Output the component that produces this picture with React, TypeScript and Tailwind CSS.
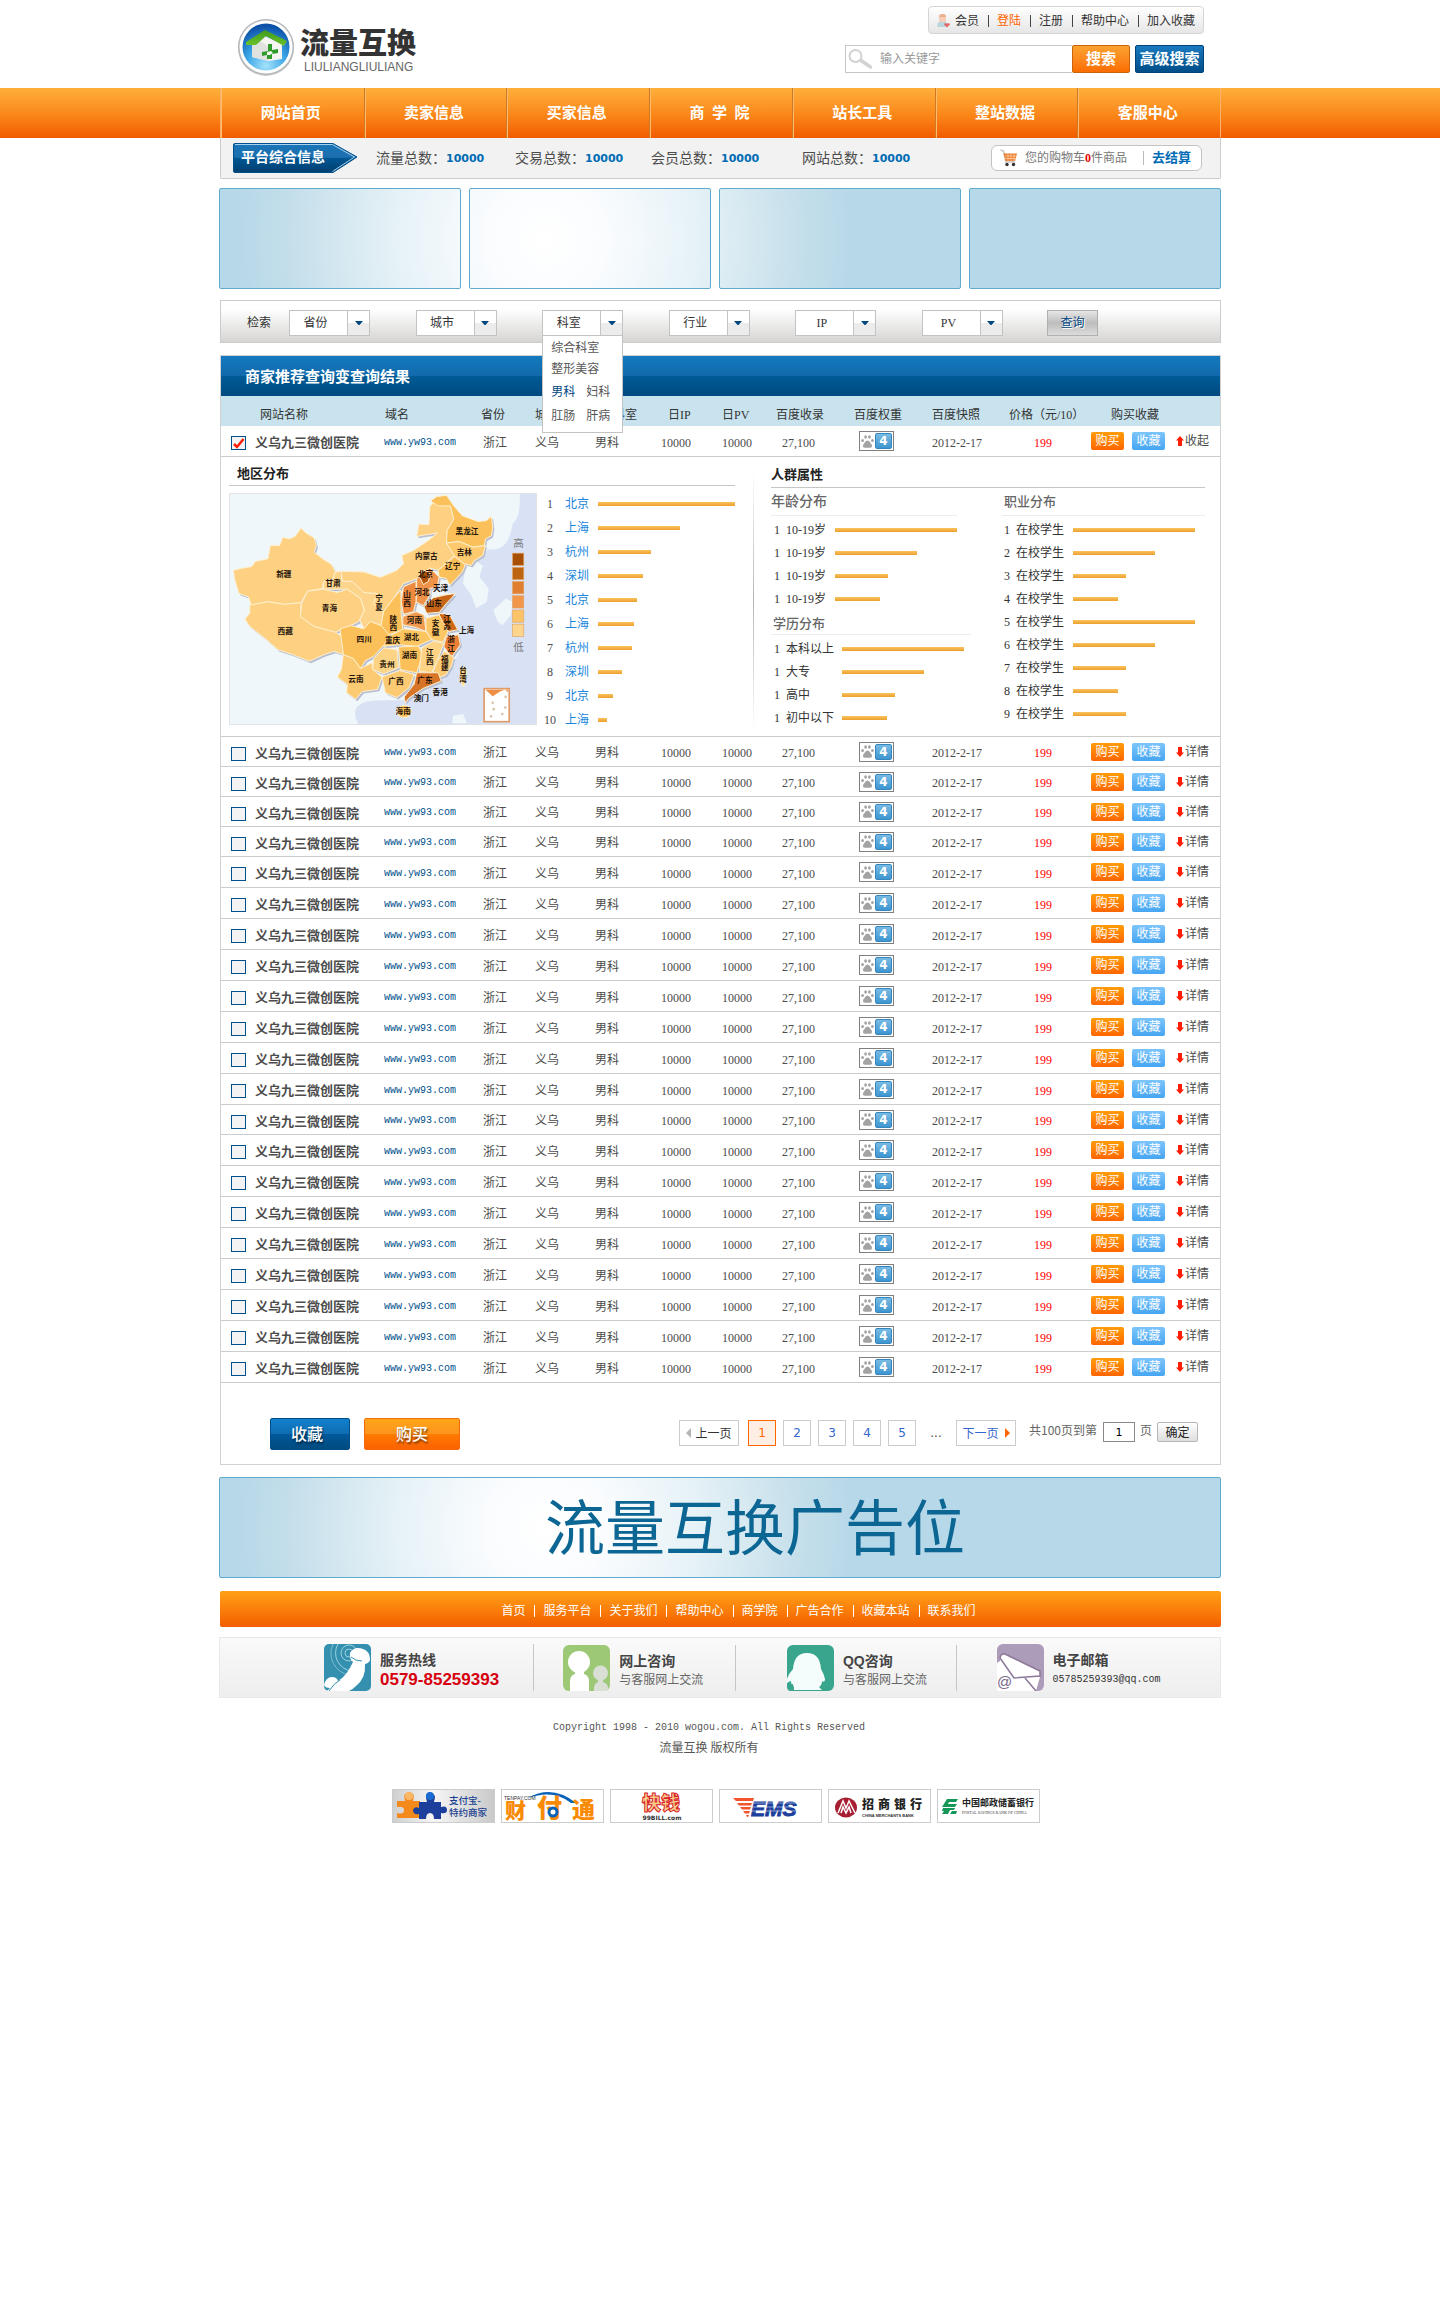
import { useState } from 'react'
import type { ReactNode } from 'react'

const NAV = ['网站首页', '卖家信息', '买家信息', '商  学  院', '站长工具', '整站数据', '客服中心']
const TOP_LINKS = ['登陆', '注册', '帮助中心', '加入收藏']
const TOTALS = ['流量总数：', '交易总数：', '会员总数：', '网站总数：']
const FILTERS = ['省份', '城市', '科室', '行业', 'IP', 'PV']
const FOOT_LINKS = ['首页', '服务平台', '关于我们', '帮助中心', '商学院', '广告合作', '收藏本站', '联系我们']

const BAR_WIDTHS = [122, 82, 53, 45]

const REGIONS = [
  { name: '北京', width: 137 },
  { name: '上海', width: 82 },
  { name: '杭州', width: 53 },
  { name: '深圳', width: 45 },
  { name: '北京', width: 39 },
  { name: '上海', width: 36 },
  { name: '杭州', width: 34 },
  { name: '深圳', width: 24 },
  { name: '北京', width: 15 },
  { name: '上海', width: 9 },
]

const JOB_WIDTHS = [122, 82, 53, 45, 122, 82, 53, 45, 53]
const EDUCATION = ['本科以上', '大专', '高中', '初中以下']

const COLUMNS = [
  { label: '', width: 'w-[34px]', pad: '' },
  { label: '网站名称', width: 'w-[129px]', pad: 'pl-[5px]' },
  { label: '域名', width: 'w-[97px]', pad: 'pl-px' },
  { label: '省份', width: 'w-[54px]', pad: '' },
  { label: '城市', width: 'w-[60px]', pad: '' },
  { label: '科室', width: 'w-[66px]', pad: 'pl-[18px]' },
  { label: '日IP', width: 'w-[61px]', pad: 'pl-[7px]' },
  { label: '日PV', width: 'w-[54px]', pad: '' },
  { label: '百度收录', width: 'w-[78px]', pad: '' },
  { label: '百度权重', width: 'w-[78px]', pad: '' },
  { label: '百度快照', width: 'w-[77px]', pad: '' },
  { label: '价格（元/10）', width: 'w-[82px]', pad: '' },
  { label: '购买收藏', width: 'w-[129px]', pad: 'pl-5' },
]

// ── Map ─────────────────────────────────────────────────────────────────────
const PROVINCES: [string, string][] = [
  ['#fdd082', 'M45,345 L75,338 L100,334 L112,318 L150,310 L157,270 L185,270 L195,245 L215,250 L232,242 L250,217 L265,232 L290,247 L296,270 L290,290 L318,312 L342,327 L354,350 L345,372 L318,380 L315,400 L270,408 L250,443 L200,448 L150,440 L100,450 L90,425 L62,415 L50,375 Z'],
  ['#fdd082', 'M95,450 L150,440 L200,448 L250,443 L248,485 L290,515 L355,532 L372,545 L378,600 L350,590 L320,600 L275,620 L225,600 L180,585 L140,550 L95,515 L80,492 L95,475 Z'],
  ['#fdd082', 'M270,408 L318,402 L360,412 L390,402 L430,430 L442,465 L425,500 L400,512 L355,532 L290,515 L248,485 L252,445 Z'],
  ['#fdd48c', 'M354,350 L372,348 L375,378 L405,378 L440,412 L480,415 L470,445 L500,470 L492,512 L460,500 L440,522 L428,495 L442,465 L430,430 L390,402 L318,402 L318,380 L345,372 Z'],
  ['#fdd082', 'M372,348 L440,350 L490,366 L540,345 L560,325 L555,300 L590,285 L635,255 L662,232 L600,242 L607,205 L637,207 L640,152 L660,128 L700,140 L712,190 L692,225 L690,262 L715,300 L665,345 L640,338 L600,370 L560,385 L530,430 L500,470 L470,445 L480,415 L440,412 L405,378 L375,378 Z'],
  ['#fbc05a', 'M642,135 L660,122 L690,118 L712,150 L738,180 L785,197 L810,195 L826,182 L830,215 L826,240 L808,250 L805,270 L770,275 L730,258 L690,262 L692,225 L712,190 L702,150 L665,150 Z'],
  ['#fdca70', 'M690,262 L730,258 L770,275 L808,270 L800,300 L775,315 L765,330 L745,325 L715,303 Z'],
  ['#fbc05a', 'M665,345 L715,303 L747,328 L738,350 L700,390 L690,370 L668,365 Z'],
  ['#ef924a', 'M600,370 L640,338 L668,365 L662,395 L640,400 L640,420 L620,452 L598,440 L600,400 Z'],
  ['#b3560c', 'M606,360 L622,345 L640,352 L636,378 L620,388 Z'],
  ['#ee8a40', 'M560,395 L598,378 L598,440 L590,470 L560,478 L553,440 Z'],
  ['#c8661a', 'M622,455 L650,428 L685,420 L716,415 L706,428 L690,445 L668,472 L630,475 Z'],
  ['#f09a50', 'M558,485 L598,470 L622,480 L628,530 L595,517 L558,510 Z'],
  ['#fcc05a', 'M530,430 L552,405 L553,478 L558,525 L510,542 L492,512 L500,470 Z'],
  ['#ce6a1a', 'M668,475 L700,480 L724,525 L697,530 L672,500 Z'],
  ['#fcc766', 'M628,490 L668,480 L695,530 L680,562 L645,555 L628,528 Z'],
  ['#ea8038', 'M690,545 L726,540 L732,570 L705,608 L682,575 Z'],
  ['#fbc05a', 'M368,522 L400,512 L440,522 L460,500 L492,512 L520,545 L500,572 L470,605 L445,618 L430,642 L408,612 L378,600 Z'],
  ['#fcc560', 'M515,545 L560,522 L628,530 L645,555 L600,575 L545,570 L500,575 Z'],
  ['#fbc05a', 'M545,577 L605,574 L618,600 L600,655 L550,645 Z'],
  ['#fdd385', 'M615,580 L650,560 L682,565 L662,620 L645,655 L608,650 Z'],
  ['#fcca74', 'M662,620 L684,590 L712,608 L705,635 L688,662 L670,668 L650,652 Z'],
  ['#fdd385', 'M470,612 L500,580 L540,585 L545,640 L500,658 L466,645 Z'],
  ['#fdca74', 'M378,600 L408,612 L430,642 L465,625 L466,645 L495,668 L482,705 L435,712 L415,735 L388,715 L390,690 L360,668 L372,645 Z'],
  ['#fdca74', 'M495,668 L548,648 L592,660 L577,700 L540,730 L505,715 Z'],
  ['#d87428', 'M600,655 L665,655 L674,680 L620,702 L578,730 L565,745 L562,728 L592,690 Z'],
]

const PLACE_NAMES: [string, number, number][] = [
  ['新疆', 198, 365], ['甘肃', 347, 391], ['青海', 336, 467], ['西藏', 202, 539], ['四川', 441, 561],
  ['重庆', 527, 565], ['湖北', 584, 555], ['湖南', 578, 611], ['贵州', 510, 639], ['云南', 416, 682],
  ['广西', 537, 690], ['广东', 625, 686], ['香港', 671, 723], ['澳门', 614, 741], ['海南', 559, 779],
  ['黑龙江', 752, 235], ['吉林', 744, 298], ['辽宁', 709, 342], ['内蒙古', 629, 312], ['北京', 627, 364],
  ['天津', 672, 409], ['河北', 616, 419], ['山东', 653, 454], ['河南', 593, 503], ['上海', 751, 535],
  ['山', 571, 427], ['西', 571, 453], ['宁', 486, 438], ['夏', 486, 466], ['陕', 529, 500], ['西', 529, 525],
  ['安', 657, 515], ['徽', 657, 540], ['江', 692, 499], ['苏', 692, 524], ['浙', 704, 562], ['江', 704, 588],
  ['江', 640, 600], ['西', 640, 627], ['福', 685, 621], ['建', 685, 648], ['台', 740, 656], ['湾', 740, 682],
]

const LEGEND = ['#a84f06', '#bd6410', '#e07f30', '#f2964a', '#fcc468', '#fdd58c']

function ChinaMap() {
  return (
    <svg
      viewBox="36 114 924 696"
      role="img"
      aria-label="地区分布"
      className="block h-[232px] w-[308px] shrink-0 border border-[#dfe3e6] font-['Noto_Sans_CJK_SC',sans-serif]"
    >
      <rect x="30" y="110" width="940" height="710" fill="#eff7fb" />
      <path
        fill="#d9e2f4"
        d="M912,110 H970 V820 H428 C400,770 415,752 450,742 C500,735 540,742 565,735 C650,710 690,670 730,590 L725,520 L670,470 L716,420 L660,400 L700,392 L760,335 C790,320 800,275 835,282 C870,280 885,240 890,205 C915,180 912,140 912,110 Z"
      />
      <path fill="#eff7fb" d="M765,310 L800,330 L790,365 L818,400 L812,440 L780,460 L765,420 L740,385 L745,350 Z" />
      <path fill="#eff7fb" d="M832,465 L870,430 L890,440 L885,480 L860,512 L845,500 Z M710,785 L740,780 L752,808 L708,808 Z" />
      <g fill="#b9bfd0" transform="translate(5 6)">
        {PROVINCES.map(([, d]) => <path key={d} d={d} />)}
      </g>
      <g stroke="#fff0cc" strokeWidth="3" strokeLinejoin="round">
        {PROVINCES.map(([fill, d]) => <path key={d} d={d} fill={fill} />)}
        <ellipse cx="562" cy="772" rx="22" ry="18" fill="#fcc05a" />
        <path d="M745,635 L752,650 L742,698 L732,680 L732,650 Z" fill="#fdd385" />
      </g>
      <rect x="804" y="703" width="76" height="100" fill="#fff" stroke="#df9a66" strokeWidth="5" />
      <path fill="#ee8f45" d="M808,706 H866 L852,712 L830,726 Z M868,706 h8 v8 z" />
      <g fill="#d9c4a8">
        <circle cx="830" cy="746" r="4" /><circle cx="833" cy="765" r="4" /><circle cx="869" cy="728" r="4" />
        <circle cx="868" cy="760" r="4" /><circle cx="859" cy="780" r="4" /><circle cx="825" cy="787" r="4" />
      </g>
      <g fontSize="23" fontWeight="700" textAnchor="middle" fill="#1c1208">
        {PLACE_NAMES.map(([name, x, y]) => <text key={`${x}-${y}`} x={x} y={y}>{name}</text>)}
      </g>
      <g fontSize="32" textAnchor="middle" fill="#777">
        <text x="908" y="275">高</text>
        <text x="908" y="588">低</text>
      </g>
      {LEGEND.map((fill, i) => (
        <rect key={fill} x="890" y={293 + i * 43} width="34" height="37" fill={fill} stroke="#e3a566" strokeWidth="2" />
      ))}
    </svg>
  )
}

// ── Icons ───────────────────────────────────────────────────────────────────
function Logo() {
  return (
    <svg viewBox="0 0 58 58" className="h-[58px] w-[58px]" aria-hidden="true">
      <defs>
        <radialGradient id="ball" cx="50%" cy="90%" r="85%">
          <stop offset="0" stopColor="#a4e2fa" />
          <stop offset=".5" stopColor="#3aa6e6" />
          <stop offset="1" stopColor="#0c50a8" />
        </radialGradient>
        <linearGradient id="roof" x1="0" y1="0" x2="0" y2="1">
          <stop offset="0" stopColor="#3f9a1a" />
          <stop offset="1" stopColor="#6cc42c" />
        </linearGradient>
      </defs>
      <circle cx="29" cy="30" r="28" fill="#c9c9c9" />
      <circle cx="29" cy="29" r="28" fill="#b5b8bb" />
      <circle cx="29" cy="29" r="26.5" fill="#fdfdfd" />
      <circle cx="29" cy="29" r="23.5" fill="url(#ball)" />
      <path d="M15 27 L28 18 L45 26 V41 L32 43 L15 39 Z" fill="#f4f4f2" />
      <path d="M15 26 L22 22 L32 29 V43 L15 39 Z" fill="#e0e2e0" />
      <path d="M9 24 L28 12 L50 23 L47 28 L29 18 L19 27 L9 27 Z" fill="url(#roof)" />
      <path d="M31 26 h4 v6 l6 -1 v4 l-6 1 v5 h-5 v-4 l-5 1 v-4 l6 -1 z" fill="#2d9a2a" />
      <path d="M30 34 l4 -1 l2 2 l-3 2 h-3 z" fill="#eef6ea" />
    </svg>
  )
}

const UserIcon = () => (
  <svg viewBox="0 0 14 14" className="h-3.5 w-3.5" aria-hidden="true">
    <rect x="2" y="0.5" width="7" height="8" rx="2" fill="#f6cdb8" />
    <path d="M2 3 q0 -3 3.5 -3 q3.5 0 3.5 3 z" fill="#e9b090" />
    <path d="M0.5 13 v-3 q0 -2 3 -2 h4 q3 0 3 2 v3 z" fill="#b9d6de" />
    <path d="M10 13.5 l-3 -3 q0 -2 3 -1 q3 -1 3 1 z" fill="#e46a6a" />
  </svg>
)

const SearchIcon = () => (
  <svg viewBox="0 0 24 20" className="h-5 w-6 shrink-0" fill="none" stroke="#d2d2d2" aria-hidden="true">
    <circle cx="7.5" cy="7" r="6" strokeWidth="2" />
    <path d="M13 11.5 L22.5 18" strokeWidth="3.5" strokeLinecap="round" />
  </svg>
)

const CartIcon = () => (
  <svg viewBox="0 0 18 18" className="h-[18px] w-[18px]" aria-hidden="true">
    <path d="M0.5 1 L3.5 2 L6 13 H15" fill="none" stroke="#c9c4c0" strokeWidth="1.5" />
    <path d="M3.5 4.5 H17 L15 12 H5.5 Z" fill="#ea7a28" />
    <path d="M4.5 7 H16 M5 9.5 H15.5 M8 5 V12 M11 5 V12 M14 5 V12" stroke="#ffd9b8" strokeWidth="0.7" />
    <circle cx="7" cy="15.5" r="1.7" fill="#333" />
    <circle cx="13.5" cy="15.5" r="1.7" fill="#333" />
  </svg>
)

const Paw = () => (
  <svg viewBox="0 0 13 13" className="h-[13px] w-[13px]" fill="#a3a3a3" aria-hidden="true">
    <ellipse cx="1.6" cy="5.5" rx="1.4" ry="1.6" />
    <ellipse cx="4.6" cy="2" rx="1.4" ry="1.7" />
    <ellipse cx="8.4" cy="2" rx="1.4" ry="1.7" />
    <ellipse cx="11.4" cy="5.5" rx="1.4" ry="1.6" />
    <path d="M6.5 5.500 q2 0 3 2.500 q2 1.500 1.500 3.500 q-0.500 1.500 -2.500 1.300 h-4 q-2 0.200 -2.500 -1.300 q-0.500 -2 1.500 -3.500 q1 -2.500 3 -2.500 z" />
  </svg>
)

const RedArrow = ({ up }: { up: boolean }) => (
  <svg viewBox="0 0 8 10" className="h-2.5 w-2" fill="#fb1d05" aria-hidden="true">
    {up ? <path d="M4 0 L8 4.5 H6 V10 H2 V4.5 H0 Z" /> : <path d="M4 10 L8 5.5 H6 V0 H2 V5.5 H0 Z" />}
  </svg>
)

const PhoneIcon = () => (
  <svg viewBox="0 0 47 47" className="h-[47px] w-[47px]" aria-hidden="true">
    <rect width="47" height="47" rx="5" fill="#3590b0" />
    <g fill="none" stroke="#9cd0df">
      <circle cx="25" cy="9" r="4" />
      <circle cx="25" cy="9" r="8" />
      <path d="M14 0 a18 18 0 0 0 14 27" />
      <path d="M9 0 a22 22 0 0 0 16 31" strokeWidth=".7" />
    </g>
    <path d="M26 9 Q30 2 39 5 Q46 7 46 16 Q45 19 41 20 Q42 34 32 42 Q28 46 25 47 H3 L6 44 Q1 44 0 41 Q2 33 8 33 Q13 33 14 37 Q22 33 29 18 Q25 14 26 9 Z" fill="#fff" />
    <path d="M5 47 Q10 39 16 36 M27 13 Q31 17 38 17" stroke="#3590b0" fill="none" />
  </svg>
)

const PeopleIcon = () => (
  <svg viewBox="0 0 47 46" className="h-[46px] w-[47px]" aria-hidden="true">
    <rect width="47" height="46" rx="6" fill="#9dc977" />
    <circle cx="16" cy="17" r="11" fill="#fff" />
    <path d="M7 46 V35 q1 -5 5 -6 v-4 h9 v4 q4 1 5 6 V46 Z" fill="#fff" />
    <circle cx="37.5" cy="28" r="7.5" fill="#d9dfd5" />
    <path d="M31 46 V42 q1 -4 4 -5 v-3 h5 v3 q4 1 5 5 v2 l-2 2 Z" fill="#d9dfd5" />
  </svg>
)

const PenguinIcon = () => (
  <svg viewBox="0 0 47 46" className="h-[46px] w-[47px]" aria-hidden="true">
    <rect width="47" height="46" rx="6" fill="#38a58c" />
    <path d="M20 8 q13 0 14 16 q3 5 4 10 q0 4 -3 2 q0 4 -3 6 l3 3 H7 l-1 -6 q-2 0 -5 3 l-1 -2 V34 q2 -6 6 -10 q1 -16 14 -16 z" fill="#f4fdfb" />
    <path d="M0 38 q3 -2 4 -2 q0 4 3 6 l-1 4 H3 q-3 -1 -3 -4 z" fill="#38a58c" />
  </svg>
)

const MailIcon = () => (
  <svg viewBox="0 0 47 47" className="h-[47px] w-[47px]" aria-hidden="true">
    <rect width="47" height="47" rx="6" fill="#ad9cb9" />
    <path d="M0 19 L3 17 L3 12 L8 10 L43 27 V33 L39 47 H0 Z" fill="#fff" />
    <path d="M3 14 L17 34 L43 32 M28 34 L39 47 M3 14 Q4 9 8 10 L43 27 V33" fill="none" stroke="#8b7899" strokeWidth="1.5" />
    <text x="7.5" y="43" fontSize="15" textAnchor="middle" fill="#7a6889" fontFamily="Liberation Sans">@</text>
  </svg>
)

const DownCaret = () => (
  <svg viewBox="0 0 8 4" className="h-1 w-2" fill="#00477f" aria-hidden="true"><path d="M0 0 H8 L4.500 4 H3.500 Z" /></svg>
)

// ── Pieces ──────────────────────────────────────────────────────────────────
const Bar = ({ width }: { width: number }) => (
  <span className="block h-1 bg-linear-to-b from-[#f9c25c] to-[#eda02c]" style={{ width }} />
)

function FilterSelect({ label }: { label: string }) {
  return (
    <div className="relative w-[81px]">
      <select
        aria-label={label}
        className="block h-[26px] w-full appearance-none border border-[#c3c3c3] bg-white pr-[28px] text-center text-xs leading-6 text-[#333]"
      >
        <option>{label}</option>
      </select>
      <span className="pointer-events-none absolute inset-y-px right-px flex w-[22px] items-center justify-center border-l border-[#c3c3c3] bg-linear-to-b from-white from-50% to-[#ececec] to-50%">
        <DownCaret />
      </span>
      {label === '科室' && (
        <ul className="absolute top-[25px] left-0 z-10 grid w-[81px] grid-cols-[35px_auto] border border-[#c3c3c3] bg-white pt-0.5 pb-1 pl-2 text-xs leading-[24px] text-[#555]">
          <li className="col-span-2 leading-[20px]">综合科室</li>
          <li className="col-span-2 leading-[22px]">整形美容</li>
          <li className="text-[#00477f]">男科</li>
          <li>妇科</li>
          <li>肛肠</li>
          <li>肝病</li>
        </ul>
      )}
    </div>
  )
}

function SiteRow({ open, tall }: { open?: boolean; tall?: boolean }) {
  const [checked, setChecked] = useState(!!open)
  const cell = 'border-b border-[#ccc] p-0 pt-[3px]'
  return (
    <tr className={tall ? 'h-[31px]' : 'h-[30px]'}>
      <td className="border-b border-[#ccc] p-0 pt-1 pl-2.5">
        <label className="relative block h-3.5 w-[15px]">
          <input
            type="checkbox"
            aria-label="义乌九三微创医院"
            checked={checked}
            onChange={(e) => setChecked(e.target.checked)}
            className="block h-3.5 w-[15px] appearance-none border border-[#00508c] bg-[#f3f3f3]"
          />
          {checked && (
            <svg viewBox="0 0 15 14" className="pointer-events-none absolute inset-0" aria-hidden="true">
              <path d="M3 8 L6 11 L12.5 3" fill="none" stroke="#fb1d05" strokeWidth="2.5" />
            </svg>
          )}
        </label>
      </td>
      <td className="border-b border-[#ccc] p-0 pt-1 text-[13px] leading-4 font-bold whitespace-nowrap">义乌九三微创医院</td>
      <td className="border-b border-[#ccc] p-0">
        <a href="#site" className="font-['Liberation_Mono',monospace] text-[10px] text-[#00508c]">www.yw93.com</a>
      </td>
      <td className={`${cell} pl-0.5`}>浙江</td>
      <td className={cell}>义乌</td>
      <td className={cell}>男科</td>
      <td className={cell}>10000</td>
      <td className={cell}>10000</td>
      <td className={`${cell} pl-1.5`}>27,100</td>
      <td className="border-b border-[#ccc] p-0 pl-[5px]">
        <span className="flex h-5 w-[35px] items-center justify-between border border-[#808080] bg-white px-px">
          <Paw />
          <span className="h-4 w-[17px] rounded-xs border border-[#3586bf] bg-linear-to-b from-[#78bbe4] to-[#3d96d0] text-center font-['DejaVu_Sans',sans-serif] text-xs leading-3.5 font-bold text-white">4</span>
        </span>
      </td>
      <td className={cell}>2012-2-17</td>
      <td className={`${cell} pl-[25px] text-[#f00]`}>199</td>
      <td className="border-b border-[#ccc] p-0">
        <div className="flex items-center">
          <button type="button" className="h-[18px] w-[33px] rounded-xs bg-linear-to-b from-[#ff9c0a] to-[#fe6500] leading-[18px] text-white">购买</button>
          <button type="button" className="ml-2 h-[18px] w-[33px] rounded-xs bg-linear-to-b from-[#7cc5fb] to-[#46a5f2] leading-[18px] text-white">收藏</button>
          <button type="button" className="ml-[11px] flex items-center gap-px leading-[18px]">
            <RedArrow up={!!open} />
            {open ? '收起' : '详情'}
          </button>
        </div>
      </td>
    </tr>
  )
}

const Numbered = ({ n, label, labelWidth, width }: { n: number; label: string; labelWidth: string; width: number }) => (
  <li className="flex h-[23px] items-center">
    <span className="w-3">{n}</span>
    <span className={labelWidth}>{label}</span>
    <Bar width={width} />
  </li>
)

function Details() {
  return (
    <div className="flex h-[279px] pl-2">
      <section className="w-[506px]">
        <h3 className="h-[29px] border-b border-[#c6c6c6] pl-2 text-[13px] leading-[34px] font-bold text-[#222]">地区分布</h3>
        <div className="flex pt-[7px]">
          <ChinaMap />
          <ol className="-mt-px ml-1">
            {REGIONS.map((r, i) => (
              <li key={i} className="flex h-6 items-center text-xs">
                <span className="w-6 pr-1.5 text-center">{i + 1}</span>
                <span className="w-[33px] text-[#1a86dc]">{r.name}</span>
                <Bar width={r.width} />
              </li>
            ))}
          </ol>
        </div>
      </section>
      <div className="mt-3 mb-1 ml-[18px] w-px bg-linear-to-b from-white via-[#b5b5b5] to-white" />
      <section className="ml-[17px] w-[434px] text-[#333]">
        <h3 className="h-[31px] border-b border-[#c6c6c6] text-[13px] leading-[36px] font-bold text-[#222]">人群属性</h3>
        <div className="flex justify-between">
          <div className="w-[200px]">
            <h4 className="h-7 w-[186px] border-b border-[#ececec] text-sm leading-7 font-medium text-[#666]">年龄分布</h4>
            <ul className="pt-0.5 pl-[3px]">
              {BAR_WIDTHS.map((w) => <Numbered key={w} n={1} label="10-19岁" labelWidth="w-[49px]" width={w} />)}
            </ul>
            <h4 className="mt-0.5 h-[23px] border-b border-[#ececec] pl-0.5 text-[13px] leading-[23px] font-medium text-[#666]">学历分布</h4>
            <ul className="pt-0.5 pl-[3px]">
              {EDUCATION.map((name, i) => <Numbered key={name} n={1} label={name} labelWidth="w-14" width={BAR_WIDTHS[i]} />)}
            </ul>
          </div>
          <div className="w-[203px]">
            <h4 className="h-7 border-b border-[#ececec] pl-0.5 text-[13px] leading-7 font-medium text-[#666]">职业分布</h4>
            <ul className="pt-0.5 pl-0.5">
              {JOB_WIDTHS.map((w, i) => <Numbered key={i} n={i + 1} label="在校学生" labelWidth="w-[57px]" width={w} />)}
            </ul>
          </div>
        </div>
      </section>
    </div>
  )
}

function Pager() {
  const box = 'flex h-[26px] items-center justify-center border'
  return (
    <div className="flex items-center pt-0.5 font-['Noto_Sans_CJK_SC',sans-serif] text-xs">
      <a href="#prev" className={`${box} w-[60px] gap-1 border-[#ccc] text-[#333]`}>
        <svg viewBox="0 0 5 10" className="h-2.5 w-[5px]" fill="#b5b5b5" aria-hidden="true"><path d="M5 0 V10 L0 5 Z" /></svg>
        上一页
      </a>
      <a href="#1" className={`${box} ml-[9px] w-7 border-[#f60] bg-[#ffeee3] font-['DejaVu_Sans',sans-serif] text-[#f60]`}>1</a>
      {[2, 3, 4, 5].map((n) => (
        <a key={n} href={`#${n}`} className={`${box} ml-[7px] w-7 border-[#ccc] font-['DejaVu_Sans',sans-serif] text-[#36c]`}>{n}</a>
      ))}
      <span className="w-10 text-center font-['DejaVu_Sans',sans-serif]">...</span>
      <a href="#next" className={`${box} w-[60px] gap-1.5 border-[#ccc] text-[#36c]`}>
        下一页
        <svg viewBox="0 0 5 10" className="h-2.5 w-[5px]" fill="#f60" aria-hidden="true"><path d="M0 0 V10 L5 5 Z" /></svg>
      </a>
      <label htmlFor="page" className="mb-1.5 ml-[13px] text-[#666]">共100页到第</label>
      <input id="page" defaultValue="1" className="mb-0.5 ml-1.5 h-5 w-8 border border-[#888] text-center font-['DejaVu_Sans',sans-serif] text-[11px] text-black" />
      <span className="mb-1.5 ml-[5px] text-[#666]">页</span>
      <button type="button" className="mb-0.5 ml-[5px] h-5 w-[41px] rounded-xs border border-[#b5b5b5] bg-linear-to-b from-white to-[#dedede] leading-[18px] text-[#222]">确定</button>
    </div>
  )
}

function Contact({ icon, title, children }: { icon: ReactNode; title: string; children: ReactNode }) {
  return (
    <div className="flex items-center gap-[9px]">
      {icon}
      <div className="pt-1">
        <h4 className="text-sm leading-5 font-bold text-[#444]">{title}</h4>
        {children}
      </div>
    </div>
  )
}

function PaymentLogos() {
  const frame = 'block h-[34px] w-[103px] border border-[#ccc] bg-white'
  return (
    <div className="mt-[31px] flex justify-center gap-1.5 pr-2 font-['Noto_Sans_CJK_SC',sans-serif]">
      <svg viewBox="0 0 101 32" className={frame} role="img" aria-label="支付宝特约商家">
        <defs>
          <linearGradient id="silver" x1="0" y1="0" x2="1" y2="0">
            <stop offset="0" stopColor="#cfcfcf" /><stop offset=".4" stopColor="#f6f6f6" /><stop offset="1" stopColor="#c9c9c9" />
          </linearGradient>
        </defs>
        <rect width="101" height="32" fill="url(#silver)" />
        <path d="M4 11 h8 q-3 -8 4 -9 q7 1 4 9 h7 v17 H4 v-5 q7 2 7 -3 q0 -4 -7 -3 z" fill="#f58a1c" />
        <circle cx="16" cy="6" r="4" fill="#fbb765" />
        <path d="M26 12 H34 Q31 4 37 2 Q44 4 41 12 H48 V17 Q54 15 54 20 Q54 24 48 23 V29 H41 Q41 23 37 23 Q33 23 33 29 H26 V24 Q20 25 20 20 Q21 16 26 18 Z" fill="#1c3f9c" />
        <circle cx="37" cy="6" r="4" fill="#1b6cd0" />
        <g fill="#17408f" fontSize="9.5" fontWeight="500">
          <text x="56" y="14">支付宝-</text>
          <text x="56" y="26">特约商家</text>
        </g>
      </svg>
      <svg viewBox="0 0 101 32" className={frame} role="img" aria-label="财付通">
        <path d="M26 8 Q50 -6 74 13 L69 13 Q52 -1 26 8 Z" fill="#0a62b8" />
        <text x="2" y="10" fontSize="5" fontFamily="Liberation Sans" fill="#333">TENPAY.COM</text>
        <g fill="#f98a05" fontWeight="900">
          <text x="3" y="28" fontSize="21">财</text>
          <text x="35" y="27" fontSize="25">付</text>
          <text x="70" y="28" fontSize="23">通</text>
        </g>
        <circle cx="51" cy="22" r="4" fill="#fff" stroke="#0a62b8" strokeWidth="3" />
      </svg>
      <svg viewBox="0 0 101 32" className={frame} role="img" aria-label="快钱">
        <text x="50" y="20" fontSize="19" fontWeight="900" textAnchor="middle" fill="#f9d08a" stroke="#d8232a" strokeWidth="1">快钱</text>
        <text x="51" y="30" fontSize="6" fontWeight="bold" fontFamily="DejaVu Sans" textAnchor="middle" fill="#333">99BILL.com</text>
      </svg>
      <svg viewBox="0 0 101 32" className={frame} role="img" aria-label="EMS">
        <path d="M13 8 H34 L33 11 H16 Z M17 13 H32 L31 15.5 H19 Z M20 17 H31 L30 19.5 H22 Z M23 21 H30 L29 23.5 H25 Z M26 25 H29 L28 27 H27 Z" fill="#f4552c" />
        <text x="31" y="26" fontSize="21" fontWeight="900" fontStyle="italic" fontFamily="Liberation Sans" fill="#1c3f9c" stroke="#1c3f9c">EMS</text>
        <path d="M32 13 H78 M31 17 H78 M31 21 H78" stroke="#fff" strokeWidth=".5" />
      </svg>
      <svg viewBox="0 0 101 32" className={frame} role="img" aria-label="招商银行">
        <ellipse cx="17" cy="17.5" rx="11" ry="10" fill="#a71e32" />
        <path d="M9 23 L14 11 L17 18 L20 11 L26 23 M12 23 L14 17 L17 23 L20 17 L22 23" stroke="#fff" strokeWidth="1.5" fill="none" />
        <g fontSize="12" fontWeight="900" fill="#222">
          <text x="33" y="19">招</text><text x="49" y="19">商</text><text x="65" y="19">银</text><text x="81" y="19">行</text>
        </g>
        <text x="33" y="27" fontSize="4" fontWeight="bold" fontFamily="Liberation Sans" fill="#333">CHINA MERCHANTS BANK</text>
      </svg>
      <svg viewBox="0 0 101 32" className={frame} role="img" aria-label="中国邮政储蓄银行">
        <path d="M9 9 H20 L18 12 H11 L10 14 H19 L17 17 H4 Z M5 18 H17 L16 20 H12 L10 24 H4 L6 21 H4 Z M14 21 H19 L18 24 H12 Z" fill="#16975a" />
        <text x="24" y="16" fontSize="9" fontWeight="700" fill="#222">中国邮政储蓄银行</text>
        <text x="24" y="24" fontSize="4" fontFamily="Liberation Serif" fill="#333">POSTAL SAVINGS BANK OF CHINA</text>
      </svg>
    </div>
  )
}

export default function App() {
  return (
    <div className="bg-white font-['Liberation_Serif','Noto_Sans_CJK_SC',serif] text-xs text-[#4c4c4c]">
      {/* Header */}
      <header className="mx-auto flex h-[88px] max-w-[1002px] justify-between pr-[17px] pl-[18px]">
        <a href="#home" className="flex pt-[18px] font-['Liberation_Sans','Noto_Sans_CJK_SC',sans-serif]">
          <Logo />
          <span className="pt-2.5 pl-[5px]">
            <strong className="block text-[29px] leading-8 font-black text-[#333]">流量互换</strong>
            <span className="block pl-1 text-xs leading-[14px] text-[#666]">LIULIANGLIULIANG</span>
          </span>
        </a>
        <div className="flex flex-col items-end pt-1.5">
          <nav className="flex h-7 items-center rounded-sm border border-[#d5d5d5] bg-linear-to-b from-white to-[#e6e6e6] px-2 pt-0.5 text-[#333]">
            <UserIcon />
            <a href="#member" className="pl-1">会员</a>
            {TOP_LINKS.map((t) => (
              <span key={t} className="flex items-center">
                <span className="mr-2 ml-[9px] h-3 w-px bg-[#444]" />
                <a href="#top" className={t === '登陆' ? 'text-[#f60]' : ''}>{t}</a>
              </span>
            ))}
          </nav>
          <form className="mt-[11px] flex h-7" onSubmit={(e) => e.preventDefault()}>
            <label className="flex w-[227px] items-center gap-2 border border-r-0 border-[#c6c6c6] pl-0.5">
              <SearchIcon />
              <input aria-label="关键字" placeholder="输入关键字" className="w-full text-xs outline-none placeholder:text-[#999]" />
            </label>
            <button type="submit" className="w-[58px] rounded-xs border border-[#c96508] bg-linear-to-b from-[#fba22e] to-[#fb6d00] text-[15px] leading-6 font-bold text-white">搜索</button>
            <button type="button" className="ml-[5px] w-[69px] rounded-xs border border-[#004277] bg-linear-to-b from-[#1a7ac0] to-[#004e88] text-[15px] leading-6 font-bold whitespace-nowrap text-white">
              高级搜索
            </button>
          </form>
        </div>
      </header>

      {/* Main navigation */}
      <nav className="bg-linear-to-b from-[#feaf3b] via-[#fb8a1a] via-50% to-[#f15a00]">
        <div className="mx-auto max-w-[1002px] pl-px">
          <ul className="grid h-[50px] grid-cols-7 border-x border-[#f9b268]">
            {NAV.map((t) => (
              <li key={t} className="border-l border-[#cf7a22] first:border-l-0">
                <a href="#nav" className="block h-full border-l border-[#fdbb6e] pr-1 text-center text-[15px] leading-[50px] font-bold whitespace-pre text-white">{t}</a>
              </li>
            ))}
          </ul>
        </div>
      </nav>

      <main className="mx-auto max-w-[1002px]">
        {/* Totals */}
        <section className="ml-px flex h-[41px] items-center rounded-b-xs border border-t-0 border-[#ccc] bg-[#f2f2f2] pr-[18px] pl-3">
          <h2 className="relative flex h-[30px] w-[125px] items-center">
            <svg viewBox="0 0 125 30" className="absolute inset-0" aria-hidden="true">
              <defs>
                <linearGradient id="tag" x1="0" y1="0" x2="0" y2="1">
                  <stop offset="0" stopColor="#1a75b8" /><stop offset=".48" stopColor="#1c6fae" /><stop offset=".5" stopColor="#005794" /><stop offset="1" stopColor="#003f70" />
                </linearGradient>
              </defs>
              <path d="M2 0.5 H100 L124 14 L100 29.5 H2 Q0.5 29.5 0.5 28 V2 Q0.5 0.5 2 0.5 Z" fill="url(#tag)" stroke="#00508c" />
              <path d="M2 1.5 H99.5 L121.5 14 L99.5 28.5" fill="none" stroke="#a9d2ee" />
            </svg>
            <span className="relative pl-2 text-sm font-bold text-white">平台综合信息</span>
          </h2>
          <dl className="grid grow grid-cols-[139px_136px_151px_auto] pt-0.5 pl-[18px] text-sm">
            {TOTALS.map((t) => (
              <div key={t} className="flex items-center">
                <dt>{t}</dt>
                <dd className="font-['DejaVu_Sans',sans-serif] text-[11px] font-bold text-[#006cb5]">10000</dd>
              </div>
            ))}
          </dl>
          <div className="flex h-[26px] w-[211px] items-center rounded-md border border-[#c3c3c3] bg-white pl-2 whitespace-nowrap text-[#777]">
            <CartIcon />
            <span className="pl-[7px]">您的购物车<b className="text-[#e60000]">0</b>件商品</span>
            <span className="mr-2 ml-4 h-3.5 w-px bg-[#bbb]" />
            <a href="#cart" className="text-[13px] font-bold text-[#006cb5]">去结算</a>
          </div>
        </section>

        {/* Ad slots share one light spot */}
        <section className="mt-[9px] grid h-[101px] grid-cols-[242fr_242fr_242fr_252fr] gap-2">
          <div className="rounded-xs border border-[#5fabd0] bg-[radial-gradient(circle_at_326px_50px,#fff,#fafcfe_60px,#e6f2f7_150px,#d7e9f1_200px,#c3deea_260px,#b7d8e9_310px)]" />
          <div className="rounded-xs border border-[#5fabd0] bg-[radial-gradient(circle_at_76px_50px,#fff,#fafcfe_60px,#e6f2f7_150px,#d7e9f1_200px,#c3deea_260px,#b7d8e9_310px)]" />
          <div className="rounded-xs border border-[#5fabd0] bg-[radial-gradient(circle_at_-174px_50px,#fff,#fafcfe_60px,#e6f2f7_150px,#d7e9f1_200px,#c3deea_260px,#b7d8e9_310px)]" />
          <div className="rounded-xs border border-[#5fabd0] bg-[#b7d8e9]" />
        </section>

        {/* Filters */}
        <form
          className="mt-[11px] ml-px flex h-[43px] items-center border border-[#ccc] bg-linear-to-b from-white from-20% to-[#d6d5d3] pt-[3px] pl-[26px] text-[#333]"
          onSubmit={(e) => e.preventDefault()}
        >
          <span>检索</span>
          <div className="ml-[18px] flex w-[714px] justify-between">
            {FILTERS.map((f) => <FilterSelect key={f} label={f} />)}
          </div>
          <button type="submit" className="ml-11 h-[26px] w-[51px] border border-[#b0b0b0] bg-linear-to-b from-[#e6e6e6] via-[#bdbdbd] to-[#dcdcdc] text-[#00477f] text-shadow-[1px_1px_0_#fff]">查询</button>
        </form>

        {/* Results */}
        <section className="mt-3 ml-px border border-[#d2d2d2]">
          <h2 className="h-10 bg-[linear-gradient(#147abf,#1269ab_50%,#005b96_50%,#004a80)] pl-6 text-[15px] leading-[42px] font-bold text-white">
            商家推荐查询变查询结果
          </h2>
          <table className="w-full table-fixed border-separate border-spacing-0 text-left">
            <thead>
              <tr className="h-[30px] bg-[#c9e3ee] text-[#333]">
                {COLUMNS.map((c) => (
                  <th key={c.label} className={`${c.width} p-0`}>
                    <span className={`block pt-2 font-normal whitespace-nowrap ${c.pad}`}>{c.label}</span>
                  </th>
                ))}
              </tr>
            </thead>
            <tbody>
              <SiteRow open tall />
              <tr>
                <td colSpan={13} className="border-b border-[#ccc] p-0"><Details /></td>
              </tr>
              {Array.from({ length: 21 }, (_, i) => <SiteRow key={i} tall={i > 3 && i !== 12} />)}
            </tbody>
          </table>
          <div className="flex h-[81px] items-start justify-between pt-[35px] pr-[22px] pl-[49px]">
            <div className="flex gap-3.5 font-['Noto_Sans_CJK_SC',sans-serif] text-base font-medium text-white">
              <button type="button" className="h-8 w-20 rounded-xs border border-[#004e88] bg-[linear-gradient(#1180cc,#0f6db2_50%,#005a9a_50%,#004a80)] pr-1.5 pb-0.5 leading-7 text-shadow-[1px_2px_2px_#0008]">收藏</button>
              <button type="button" className="h-8 w-24 rounded-xs border border-[#f66a0a] bg-[linear-gradient(#ffa616,#fd9420_50%,#ff7d00_50%,#fb6100)] pb-0.5 leading-7 text-shadow-[1px_2px_2px_#0008]">购买</button>
            </div>
            <Pager />
          </div>
        </section>

        <section className="mt-3 flex h-[101px] items-center justify-center rounded-xs border border-[#5fabd0] bg-[radial-gradient(circle_at_326px_50px,#fff,#fafcfe_60px,#e6f2f7_150px,#d7e9f1_200px,#c3deea_260px,#b7d8e9_310px)] pb-2 pl-[70px]">
          <p className="font-['Noto_Sans_CJK_SC',sans-serif] text-6xl leading-none text-[#0b6694]">流量互换广告位</p>
        </section>
      </main>

      <footer className="mx-auto max-w-[1002px]">
        <nav className="mt-[13px] ml-px flex h-9 items-center justify-center rounded-xs bg-linear-to-b from-[#ffa016] to-[#f35c00] pt-1 pl-9 text-white">
          {FOOT_LINKS.map((t, i) => (
            <span key={t} className="flex items-center">
              {i > 0 && <span className="mr-2 ml-[9px] h-3 w-px bg-white" />}
              <a href="#foot">{t}</a>
            </span>
          ))}
        </nav>

        <section className="mt-2.5 grid h-[61px] grid-cols-[315fr_202fr_221fr_264fr] items-center border border-[#e8e8e8] bg-linear-to-b from-[#fafafa] to-[#eee] font-['Liberation_Sans','Noto_Sans_CJK_SC',sans-serif]">
          <div className="border-r border-[#c6c6c6] pl-[104px]">
            <Contact icon={<PhoneIcon />} title="服务热线">
              <p className="text-[17px] leading-5 font-bold text-[#d7000f]">0579-85259393</p>
            </Contact>
          </div>
          <div className="border-r border-[#c6c6c6] pl-[29px]">
            <Contact icon={<PeopleIcon />} title="网上咨询">
              <p className="leading-[18px] text-[#666]">与客服网上交流</p>
            </Contact>
          </div>
          <div className="border-r border-[#c6c6c6] pl-[51px]">
            <Contact icon={<PenguinIcon />} title="QQ咨询">
              <p className="leading-[18px] text-[#666]">与客服网上交流</p>
            </Contact>
          </div>
          <div className="pl-10">
            <Contact icon={<MailIcon />} title="电子邮箱">
              <p className="font-['Liberation_Mono',monospace] text-[10px] leading-5 text-[#333]">05785259393@qq.com</p>
            </Contact>
          </div>
        </section>

        <div className="mt-5 pr-[22px] text-center leading-5 text-[#555]">
          <p className="font-['Liberation_Mono',monospace] text-[10px] leading-5">Copyright 1998 - 2010 wogou.com. All Rights Reserved</p>
          <p>流量互换 版权所有</p>
        </div>
        <PaymentLogos />
      </footer>
    </div>
  )
}
